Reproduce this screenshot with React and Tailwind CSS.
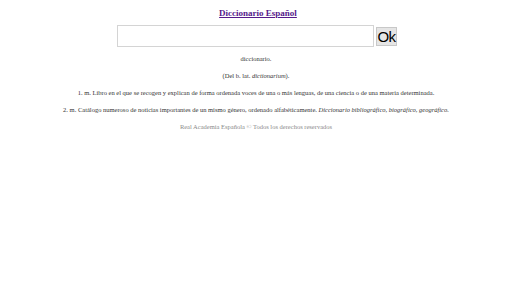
export default function App() {
  return (
    <div
      className="min-h-[288px] bg-white flex flex-col items-center text-black"
      style={{ fontFamily: '"Liberation Serif", serif' }}
    >
      <a
        href="#"
        className="mt-[7px] ml-[4px] text-[9px] font-bold text-[#551a8b] underline leading-[12px]"
      >
        Diccionario Español
      </a>

      <div className="mt-[6px] flex items-end gap-[2px] ml-[2px]">
        <input
          type="text"
          className="w-[257px] h-[22px] border border-[#d4d4d4] bg-white outline-none"
        />
        <button
          className="h-[19px] w-[21px] mb-[1px] border border-[#c8c8c8] bg-[#e5e5e5] text-[15px] leading-[17px] tracking-[-0.5px] text-black"
          style={{ fontFamily: '"Liberation Sans", sans-serif' }}
        >
          Ok
        </button>
      </div>

      <div className="mt-[7px] flex flex-col items-center gap-[7px] text-[6.5px] leading-[10px] text-[#333]">
        <p>diccionario.</p>
        <p>
          (Del b. lat. <i>dictionarium</i>).
        </p>
        <p>
          1. m. Libro en el que se recogen y explican de forma ordenada voces de una o más lenguas, de una ciencia o de una materia determinada.
        </p>
        <p>
          2. m. Catálogo numeroso de noticias importantes de un mismo género, ordenado alfabéticamente.{" "}
          <i>Diccionario bibliográfico, biográfico, geográfico.</i>
        </p>
        <p className="text-[#8a8a8a]">Real Academia Española © Todos los derechos reservados</p>
      </div>
    </div>
  );
}
